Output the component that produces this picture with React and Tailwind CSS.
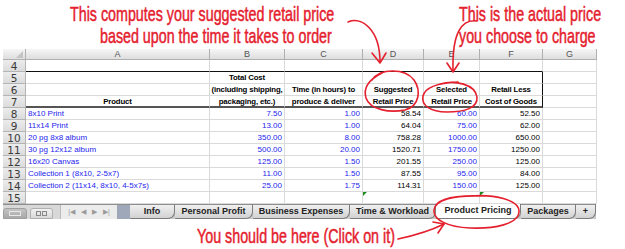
import React from "react";

const COLS = "grid-cols-[23px_184px_75px_78px_61px_56px_63px_54px]";

const rows = [
  ["8x10 Print", "7.50", "1.00", "58.54", "60.00", "52.50"],
  ["11x14 Print", "13.00", "1.00", "64.04", "75.00", "62.00"],
  ["20 pg 8x8 album", "350.00", "8.00", "758.28", "1000.00", "650.00"],
  ["30 pg 12x12 album", "500.00", "20.00", "1520.71", "1750.00", "1250.00"],
  ["16x20 Canvas", "125.00", "1.50", "201.55", "250.00", "125.00"],
  ["Collection 1 (8x10, 2-5x7)", "11.00", "1.50", "87.55", "95.00", "84.00"],
  ["Collection 2 (11x14, 8x10, 4-5x7s)", "25.00", "1.75", "114.31", "150.00", "125.00"],
];

const tabs = [
  { name: "Info", w: "w-[45px]" },
  { name: "Personal Profit", w: "w-[78px]" },
  { name: "Business Expenses", w: "w-[97px]" },
  { name: "Time & Workload", w: "w-[86px]" },
  { name: "Product Pricing", w: "w-[85px]", active: true },
  { name: "Packages", w: "w-[55px]" },
  { name: "+", w: "w-[20px]" },
];

const cell = "border-r border-b border-[#dadada] h-[12px] leading-[12px] overflow-visible whitespace-nowrap";
const head = "text-center font-bold text-black text-[7.8px] tracking-[-0.15px]";
const rowHead = "border-r border-b border-[#b4b4b4] bg-gradient-to-b from-[#ececec] to-[#dcdcdc] h-[12px] leading-[12px] text-center text-[10.5px] text-[#3a3a3a] font-['DejaVu_Sans',sans-serif]";

// hand-lettered annotation line, squeezed like a condensed face
function Note({ children, className = "" }) {
  return (
    <div className={`h-[22px] whitespace-nowrap ${className}`}>
      <span className="inline-block origin-left scale-x-[0.68] [-webkit-text-stroke:0.5px_#e5202e]">{children}</span>
    </div>
  );
}

function RowNum({ n }) {
  return <div className={rowHead}>{n}</div>;
}

function Tri() {
  return (
    <span className="absolute left-0 top-0 w-0 h-0 border-t-[4px] border-t-[#1f8a1f] border-r-[4px] border-r-transparent" />
  );
}

export default function App() {
  const red = "text-[#e5202e]";
  return (
    <div className="relative w-[625px] h-[249px] bg-white overflow-hidden font-['Liberation_Sans',sans-serif]">
      {/* annotations top */}
      <div className={`h-[49px] flex pt-[3px] ${red} text-[21px] leading-[22px]`}>
        <div className="w-[482px]">
          <Note className="pl-[70px]">This computes your suggested retail price</Note>
          <Note className="pl-[100px]">based upon the time it takes to order</Note>
        </div>
        <div>
          <Note>This is the actual price</Note>
          <Note>you choose to charge</Note>
        </div>
      </div>

      {/* sheet */}
      <div className="pl-[3px] w-[596px]">
        <div className={`grid ${COLS} text-[9px] text-[#555]`}>
          <div className="h-[11px] border-r border-b border-[#b0b0b0] bg-gradient-to-b from-[#f6f6f6] to-[#dedede] relative">
            <span className="absolute right-[2px] bottom-[1px] w-0 h-0 border-b-[7px] border-b-[#c4c4c4] border-l-[7px] border-l-transparent" />
          </div>
          {["A", "B", "C", "D", "E", "F", "G"].map((c) => (
            <div key={c} className="h-[11px] leading-[11px] text-center border-r border-b border-[#b0b0b0] bg-gradient-to-b from-[#f6f6f6] to-[#dedede]">
              {c}
            </div>
          ))}
        </div>

        <div className={`grid ${COLS} text-[8px]`}>
          {/* row 4 */}
          <RowNum n={4} />
          <div className={`${cell} border-b-[#111] border-b-[1.5px]`} />
          <div className={`${cell} border-b-[#111] border-b-[1.5px]`} />
          <div className={`${cell} border-b-[#111] border-b-[1.5px]`} />
          <div className={`${cell} border-b-[#111] border-b-[1.5px]`} />
          <div className={`${cell} border-b-[#111] border-b-[1.5px]`} />
          <div className={`${cell} border-b-[#111] border-b-[1.5px]`} />
          <div className={cell} />

          {/* row 5 */}
          <RowNum n={5} />
          <div className={cell} />
          <div className={`${cell} ${head}`}>Total Cost</div>
          <div className={cell} />
          <div className={cell} />
          <div className={cell} />
          <div className={`${cell} border-r-[#111] border-r-[1.5px]`} />
          <div className={cell} />

          {/* row 6 */}
          <RowNum n={6} />
          <div className={cell} />
          <div className={`${cell} ${head}`}>(including shipping,</div>
          <div className={`${cell} ${head}`}>Time (in hours) to</div>
          <div className={`${cell} ${head}`}>Suggested</div>
          <div className={`${cell} ${head}`}>Selected</div>
          <div className={`${cell} ${head} border-r-[#111] border-r-[1.5px]`}>Retail Less</div>
          <div className={cell} />

          {/* row 7 */}
          <RowNum n={7} />
          <div className={`${cell} ${head} border-b-[#555] border-b-2`}>Product</div>
          <div className={`${cell} ${head} border-b-[#555] border-b-2`}>packaging, etc.)</div>
          <div className={`${cell} ${head} border-b-[#555] border-b-2`}>produce &amp; deliver</div>
          <div className={`${cell} ${head} border-b-[#555] border-b-2`}>Retail Price</div>
          <div className={`${cell} ${head} border-b-[#555] border-b-2`}>Retail Price</div>
          <div className={`${cell} ${head} border-b-[#555] border-b-2 border-r-[#111] border-r-[1.5px]`}>Cost of Goods</div>
          <div className={cell} />

          {rows.map((r, i) => (
            <React.Fragment key={i}>
              <RowNum n={8 + i} />
              <div className={`${cell} pl-[2px] text-[#2424ee]`}>{r[0]}</div>
              <div className={`${cell} pr-[2px] text-right text-[#2424ee]`}>{r[1]}</div>
              <div className={`${cell} pr-[2px] text-right text-[#2424ee]`}>{r[2]}</div>
              <div className={`${cell} pr-[2px] text-right text-black`}>{r[3]}</div>
              <div className={`${cell} pr-[2px] text-right text-[#2424ee]`}>{r[4]}</div>
              <div className={`${cell} pr-[2px] text-right text-black`}>{r[5]}</div>
              <div className={cell} />
            </React.Fragment>
          ))}

          {/* row 15 */}
          <RowNum n={15} />
          <div className={cell} />
          <div className={cell} />
          <div className={cell} />
          <div className={`${cell} relative`}><Tri /></div>
          <div className={cell} />
          <div className={`${cell} relative`}><Tri /></div>
          <div className={cell} />
        </div>

        {/* tab bar */}
        <div className="h-[15px] flex items-stretch bg-[#c9c9c9] border-t border-[#8e8e8e]">
          <div className="w-[57px] flex items-end gap-[3px] bg-[#d8d8d8]">
            <div className="w-[24px] h-[11px] rounded-t-[3px] border border-[#a0a0a0] bg-gradient-to-b from-[#c4c4c4] to-[#a8a8a8] flex items-center justify-center">
              <span className="w-[12px] h-[5px] border border-[#e8e8e8]" />
            </div>
            <div className="w-[23px] h-[11px] rounded-t-[3px] border border-[#b0b0b0] bg-gradient-to-b from-[#f2f2f2] to-[#d8d8d8] flex items-center justify-center gap-[1px]">
              <span className="w-[5px] h-[5px] border border-[#888]" />
              <span className="w-[5px] h-[5px] border border-[#888]" />
            </div>
          </div>
          <div className="w-[57px] bg-[#ececec] flex items-center justify-center gap-[6px] text-[7px] text-[#9a9a9a] border-l border-[#bbb]">
            <span>|◀</span>
            <span>◀</span>
            <span>▶</span>
            <span>▶|</span>
          </div>
          <div className="w-[13px] bg-[#9fa8b8]" />
          {tabs.map((t) => (
            <div
              key={t.name}
              className={`${t.w} -mt-[1px] flex items-center justify-center text-[9px] font-bold text-[#222] border-r border-b border-[#7c7c7c] rounded-br-[7px] rounded-bl-[1px] ${
                t.active ? "bg-white border-t-0" : "bg-gradient-to-b from-[#f0f0f0] to-[#d2d2d2] border-t border-t-[#8e8e8e]"
              }`}
            >
              {t.name}
            </div>
          ))}
          <div className="flex-1 bg-[#9fa8b8]" />
        </div>
      </div>

      {/* bottom note */}
      <div className={`pl-[197px] pt-[6px] ${red} text-[21px] leading-[22px]`}>
        <Note>You should be here (Click on it)</Note>
      </div>

      {/* hand drawn marks */}
      <svg className="absolute inset-0 pointer-events-none" width="625" height="249" viewBox="0 0 625 249" fill="none" stroke="#e5202e" strokeWidth="1.6" strokeLinecap="round" strokeLinejoin="round">
        <path d="M348,22 C362,16 380,30 380,62" />
        <path d="M372,53 L380,63 L386,53" />
        <path d="M477,21 C462,19 452,32 453,71" />
        <path d="M447,63 L453,72 L459,63" />
        <path d="M372,80 C380,68 405,68 414,80 C421,90 420,106 405,110 C390,113 370,110 366,98 C363,88 368,80 382,73" />
        <path d="M440,84 C455,80 475,84 477,97 C478,108 465,112 447,112 C430,112 421,105 423,96 C425,88 437,83 458,82" />
        <path d="M470,196 C495,194 520,200 519,212 C518,224 495,229 470,228 C448,227 433,220 434,210 C435,200 452,195 482,196" />
        <path d="M398,239 C412,236 430,231 444,224" />
        <path d="M433,222 L444,224 L438,233" />
      </svg>
    </div>
  );
}
